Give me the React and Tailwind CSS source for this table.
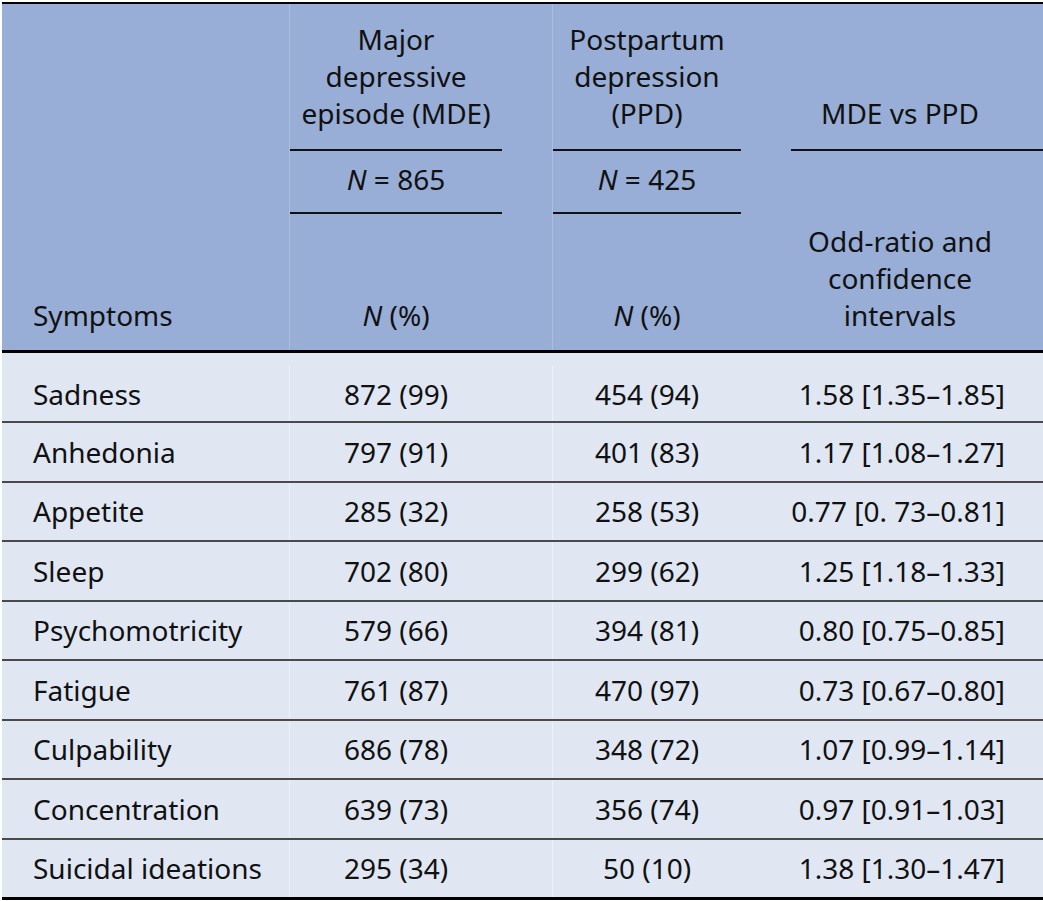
import React from "react";

const rows = [
  ["Sadness", "872 (99)", "454 (94)", "1.58 [1.35–1.85]"],
  ["Anhedonia", "797 (91)", "401 (83)", "1.17 [1.08–1.27]"],
  ["Appetite", "285 (32)", "258 (53)", "0.77 [0. 73–0.81]"],
  ["Sleep", "702 (80)", "299 (62)", "1.25 [1.18–1.33]"],
  ["Psychomotricity", "579 (66)", "394 (81)", "0.80 [0.75–0.85]"],
  ["Fatigue", "761 (87)", "470 (97)", "0.73 [0.67–0.80]"],
  ["Culpability", "686 (78)", "348 (72)", "1.07 [0.99–1.14]"],
  ["Concentration", "639 (73)", "356 (74)", "0.97 [0.91–1.03]"],
  ["Suicidal ideations", "295 (34)", "50 (10)", "1.38 [1.30–1.47]"],
];

const App = () => {
  return (
    <div
      className="bg-white pl-[2px] pt-[2px] text-[28px] text-[#111]"
      style={{ fontFamily: '"Noto Sans", "Open Sans", sans-serif' }}
    >
      <div className="w-[1041px]">
        {/* Header */}
        <div className="flex border-t-2 border-b-[3px] border-black bg-[#98aed6] leading-[37px]">
          {/* Symptoms */}
          <div className="flex h-[346px] w-[287px] items-end pb-[16px] pl-[31px]">
            Symptoms
          </div>

          {/* MDE */}
          <div className="flex w-[263px] flex-col border-l border-white/20 pr-[50px]">
            <div className="flex h-[145px] flex-col items-center justify-end pb-[17px] text-center">
              <span>Major</span>
              <span>depressive</span>
              <span>episode (MDE)</span>
            </div>
            <div className="h-[2px] bg-[#111]" />
            <div className="flex h-[61px] items-center justify-center pb-[5px]">
              <span>
                <i>N</i> = 865
              </span>
            </div>
            <div className="h-[2px] bg-[#111]" />
            <div className="flex flex-1 items-end justify-center pb-[16px]">
              <span>
                <i>N</i> (%)
              </span>
            </div>
          </div>

          {/* PPD */}
          <div className="flex w-[239px] flex-col border-l border-white/20 pr-[50px]">
            <div className="flex h-[145px] flex-col items-center justify-end pb-[17px] text-center">
              <span>Postpartum</span>
              <span>depression</span>
              <span>(PPD)</span>
            </div>
            <div className="h-[2px] bg-[#111]" />
            <div className="flex h-[61px] items-center justify-center pb-[5px]">
              <span>
                <i>N</i> = 425
              </span>
            </div>
            <div className="h-[2px] bg-[#111]" />
            <div className="flex flex-1 items-end justify-center pb-[16px]">
              <span>
                <i>N</i> (%)
              </span>
            </div>
          </div>

          {/* MDE vs PPD */}
          <div className="flex w-[252px] flex-col">
            <div className="flex h-[145px] items-end justify-center pb-[17px] pr-[34px]">
              MDE vs PPD
            </div>
            <div className="h-[2px] bg-[#111]" />
            <div className="flex flex-1 flex-col items-center justify-end pb-[16px] pr-[34px] text-center">
              <span>Odd-ratio and</span>
              <span>confidence</span>
              <span>intervals</span>
            </div>
          </div>
        </div>

        {/* Body */}
        <div className="border-b-[3px] border-black bg-[#e0e7f3]">
          {rows.map((r, i) => (
            <div
              key={r[0]}
              className={
                i === 0
                  ? "flex h-[68px] items-center pt-[13px]"
                  : "flex h-[59.5px] items-center border-t-2 border-[#4a4a4a]"
              }
            >
              <div className="flex h-full w-[287px] items-center pl-[31px]">{r[0]}</div>
              <div className="flex h-full w-[263px] items-center justify-center border-l border-white/40 pr-[50px]">
                {r[1]}
              </div>
              <div className="flex h-full w-[239px] items-center justify-center border-l border-white/40 pr-[50px]">
                {r[2]}
              </div>
              <div className="flex h-full w-[252px] items-center justify-end pr-[38px]">
                {r[3]}
              </div>
            </div>
          ))}
        </div>
      </div>
    </div>
  );
};

export default App;
